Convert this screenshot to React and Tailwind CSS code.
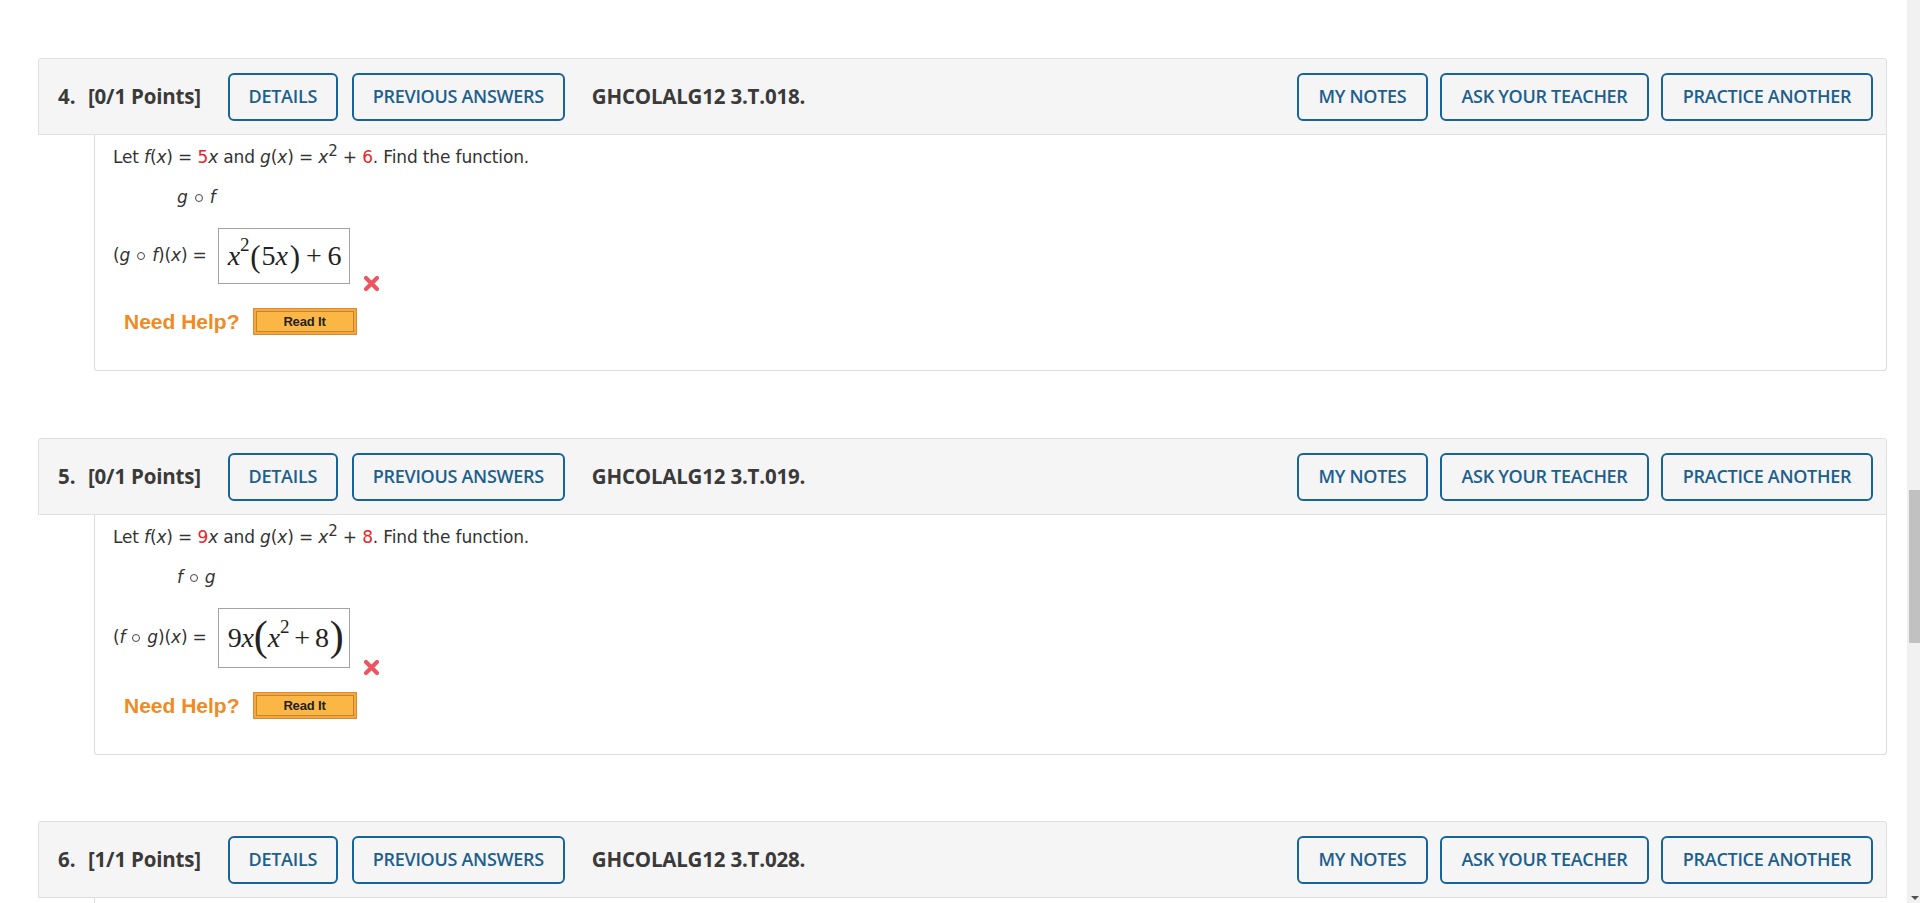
import React from 'react';

const questions = [
  {
    num: '4.',
    points: '[0/1 Points]',
    code: 'GHCOLALG12 3.T.018.',
    a: '5',
    b: '6',
    op: ['g', 'f'],
    answer: 'gof',
  },
  {
    num: '5.',
    points: '[0/1 Points]',
    code: 'GHCOLALG12 3.T.019.',
    a: '9',
    b: '8',
    op: ['f', 'g'],
    answer: 'fog',
  },
];

function HeaderButton({ label, width }) {
  return (
    <div
      className={`h-[48px] ${width} flex items-center justify-center rounded-[6px] border-2 border-[#17649a] text-[#1d5f8d] text-[18px] font-semibold tracking-[-0.3px] whitespace-nowrap`}
    >
      {label}
    </div>
  );
}

function Header({ num, points, code }) {
  return (
    <div className="h-[77px] flex items-center bg-[#f5f5f5] border border-[#e0e0e0] rounded-t-[3px] pl-[19px] pr-[13px] font-['Open_Sans',sans-serif]">
      <span className="w-[30px] text-[20.5px] font-bold text-[#3a3a3a]">{num}</span>
      <span className="text-[20.5px] font-bold text-[#3a3a3a] tracking-[-0.2px]">{points}</span>
      <div className="ml-[27px] flex items-center gap-[14px]">
        <HeaderButton label="DETAILS" width="w-[110px]" />
        <HeaderButton label="PREVIOUS ANSWERS" width="w-[213px]" />
      </div>
      <span className="ml-[27px] text-[20.5px] font-bold text-[#3a3a3a] tracking-[-0.2px]">{code}</span>
      <div className="ml-auto flex items-center gap-[12px]">
        <HeaderButton label="MY NOTES" width="w-[131px]" />
        <HeaderButton label="ASK YOUR TEACHER" width="w-[209px]" />
        <HeaderButton label="PRACTICE ANOTHER" width="w-[212px]" />
      </div>
    </div>
  );
}

function WrongMark() {
  return (
    <svg width="17" height="17" viewBox="0 0 17 17" className="ml-[13px] mb-[-8px] shrink-0">
      <path d="M3 3 L14 14 M14 3 L3 14" stroke="#ec5560" strokeWidth="4.2" strokeLinecap="round" />
    </svg>
  );
}

function ReadIt() {
  return (
    <div className="h-[27px] w-[104px] border border-[#dc8a2e] bg-[#f6a83e] p-[2px] flex">
      <div className="flex-1 border border-[#c98326] bg-[#fbb745] flex items-center justify-center text-[13px] font-bold text-[#222] font-['Liberation_Sans',Arial,sans-serif]">
        Read It
      </div>
    </div>
  );
}

function Compose() {
  return <span className="inline-block w-[8px] h-[8px] rounded-full border-[1.5px] border-[#444] mx-[7px] align-[1px]" />;
}

function Answer({ kind }) {
  if (kind === 'gof') {
    return (
      <div className="h-[56px] w-[132px] border border-[#a3a3a3] flex items-center pl-[9px] font-['Liberation_Serif',serif] text-[28px] leading-none text-[#222] whitespace-nowrap">
        <i>x</i>
        <span className="text-[19px] relative top-[-12px] mr-[1px]">2</span>
        <span className="text-[31px] mr-[1px]">(</span>
        <span>5<i>x</i></span>
        <span className="text-[31px] ml-[2px]">)</span>
        <span className="mx-[6px]">+</span>
        <span>6</span>
      </div>
    );
  }
  return (
    <div className="h-[60px] w-[132px] border border-[#a3a3a3] flex items-center pl-[9px] font-['Liberation_Serif',serif] text-[28px] leading-none text-[#222] whitespace-nowrap">
      <span>9<i>x</i></span>
      <span className="text-[42px] font-light mb-[4px]">(</span>
      <i>x</i>
      <span className="text-[19px] relative top-[-12px]">2</span>
      <span className="mx-[5px]">+</span>
      <span>8</span>
      <span className="text-[42px] font-light mb-[4px] ml-[1px]">)</span>
    </div>
  );
}

function Body({ q }) {
  const [o1, o2] = q.op;
  return (
    <div className="border-x border-b border-[#dcdcdc] rounded-b-[3px] ml-[56px] pl-[18px] pt-[10px] pb-[35px] bg-white font-['DejaVu_Sans',Verdana,sans-serif] text-[17px] tracking-[-0.15px] text-[#333]">
      <div className="h-[24px] leading-[24px] whitespace-nowrap">
        Let <i>f</i>(<i>x</i>) = <span className="text-[#e8262b]">{q.a}</span><i>x</i> and <i>g</i>(<i>x</i>) = <i>x</i>
        <sup className="text-[15px] top-[-7px]">2</sup> + <span className="text-[#e8262b]">{q.b}</span>. Find the function.
      </div>
      <div className="mt-[16px] ml-[64px] h-[24px] leading-[24px]">
        <i>{o1}</i>
        <Compose />
        <i>{o2}</i>
      </div>
      <div className="mt-[19px] flex items-center">
        <span className="mr-[11px] whitespace-nowrap">
          (<i>{o1}</i>
          <Compose />
          <i>{o2}</i>)(<i>x</i>) =
        </span>
        <div className="flex items-end">
          <Answer kind={q.answer} />
          <WrongMark />
        </div>
      </div>
      <div className="mt-[24px] h-[27px] flex items-center ml-[11px]">
        <span className="text-[21px] leading-[27px] font-bold text-[#f08b22] font-['Liberation_Sans',Arial,sans-serif] tracking-normal mr-[13px]">
          Need Help?
        </span>
        <ReadIt />
      </div>
    </div>
  );
}

export default function App() {
  return (
    <div className="h-[903px] w-[1920px] overflow-hidden flex bg-white">
      <div className="flex-1 pl-[38px] pr-[20px] pt-[58px]">
        {questions.map((q, i) => (
          <div key={q.num} className={i > 0 ? 'mt-[67px]' : ''}>
            <Header num={q.num} points={q.points} code={q.code} />
            <Body q={q} />
          </div>
        ))}
        <div className="mt-[66px]">
          <Header num="6." points="[1/1 Points]" code="GHCOLALG12 3.T.028." />
          <div className="ml-[56px] h-[40px] border-l border-[#dcdcdc]" />
        </div>
      </div>
      <div className="w-[13px] bg-[#f1f1f1] flex flex-col">
        <div className="mt-[490px] ml-[2px] h-[153px] bg-[#c1c1c1]" />
        <div className="mt-auto mb-[3px] ml-[4px] w-0 h-0 border-l-[4px] border-r-[4px] border-t-[4px] border-l-transparent border-r-transparent border-t-[#505050]" />
      </div>
    </div>
  );
}
